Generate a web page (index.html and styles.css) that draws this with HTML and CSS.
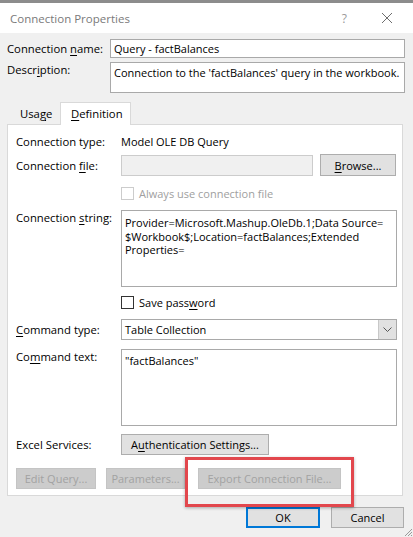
FILE: index.html
```html
<!DOCTYPE html>
<html lang="en">
<head>
    <meta charset="UTF-8">
    <meta name="viewport" content="width=device-width, initial-scale=1.0">
    <link rel="stylesheet" href="styles.css">
    <title>Connection Properties</title>
</head>
<body>

    <div class="strip"></div>
    <div class="titlebar">
        <span class="title">Connection Properties</span>
        <span class="help">?</span>
        <svg class="close" width="12" height="12" viewBox="0 0 12 12"><path d="M1 1L11 11M11 1L1 11" stroke="#6e6e6e" stroke-width="1"/></svg>
    </div>

    <div class="dialog">
        <div class="row name-row">
            <div class="lbl">Connection <u>n</u>ame:</div>
            <div class="box name-box">Query - factBalances</div>
        </div>
        <div class="row desc-row">
            <div class="lbl">Descr<u>i</u>ption:</div>
            <div class="box desc-box">Connection to the 'factBalances' query in the workbook.</div>
        </div>

        <div class="tabs">
            <div class="tab">Usa<u>g</u>e</div>
            <div class="tab active"><u>D</u>efinition</div>
        </div>

        <div class="panel">
            <div class="prow r-type">
                <div class="plbl">Connection type:</div>
                <div>Model OLE DB Query</div>
            </div>
            <div class="prow r-file">
                <div class="plbl">Connection <u>f</u>ile:</div>
                <div class="filebox"></div>
                <div class="btn browse"><u>B</u>rowse...</div>
            </div>
            <div class="prow r-always">
                <div class="plbl"></div>
                <div class="check off"></div>
                <span class="muted">Always use connection file</span>
            </div>
            <div class="prow r-string">
                <div class="plbl top">Connection <u>s</u>tring:</div>
                <div class="box area">Provider=Microsoft.Mashup.OleDb.1;Data Source=<br>$Workbook$;Location=factBalances;Extended<br>Properties=</div>
            </div>
            <div class="prow r-save">
                <div class="plbl"></div>
                <div class="check"></div>
                <span>Save pass<u>w</u>ord</span>
            </div>
            <div class="prow r-ctype">
                <div class="plbl"><u>C</u>ommand type:</div>
                <div class="box select">
                    <span>Table Collection</span>
                    <div class="arrow"><svg width="9" height="6" viewBox="0 0 9 6"><path d="M0.5 0.5L4.5 4.5L8.5 0.5" fill="none" stroke="#555" stroke-width="1"/></svg></div>
                </div>
            </div>
            <div class="prow r-ctext">
                <div class="plbl top">Co<u>m</u>mand text:</div>
                <div class="box area">"factBalances"</div>
            </div>
            <div class="prow r-excel">
                <div class="plbl">Excel Services:</div>
                <div class="btn auth">A<u>u</u>thentication Settings...</div>
            </div>
            <div class="prow r-actions">
                <div class="btn dis edit">Edit Query...</div>
                <div class="btn dis params">Parameters...</div>
                <div class="btn dis export">Export Connection File...</div>
            </div>
        </div>

        <div class="footer">
            <div class="btn ok">OK</div>
            <div class="btn cancel">Cancel</div>
        </div>
    </div>

    <div class="highlight"></div>
    <svg class="grip" width="9" height="9" viewBox="0 0 9 9"><path d="M8 1L1 8M8 4L4 8M8 7L7 8" stroke="#9a9a9a" stroke-width="1"/></svg>

</body>
</html>
```

FILE: styles.css
```css
body{margin: 0;width: 413px;height: 537px;background-color: #f0f0f0;font-family: "Open Sans", "Noto Sans", sans-serif;font-size: 11px;color: #000;overflow: hidden;position: relative;}
u{text-underline-offset: 2px;}

.strip{height: 3px;background-color: #8c8c8c;}
.titlebar{height: 30px;background-color: #fff;display: flex;align-items: center;padding: 0 0 0 10px;}
.title{color: #7a7a7a;font-size: 11.5px;flex: 1;}
.help{color: #9a9a9a;font-size: 12px;margin-right: 34px;}
.close{margin-right: 20px;}

.dialog{padding: 0 8px 0 7px;}
.row{display: flex;}
.lbl{width: 103px;font-size: 11.3px;}
.box{background-color: #fff;border: 1px solid #a9a9a9;box-sizing: border-box;padding: 0 3px;}
.name-row{margin-top: 6px;align-items: center;}
.name-box{width: 295px;height: 19px;line-height: 17px;}
.desc-row{margin-top: 4px;}
.desc-row .lbl{line-height: 15px;}
.desc-box{width: 295px;height: 31px;line-height: 17px;padding-top: 1px;white-space: nowrap;overflow: hidden;}

.tabs{display: flex;margin-top: 9px;height: 22px;align-items: flex-end;position: relative;z-index: 1;}
.tab{height: 20px;line-height: 19px;padding: 0 10px 0 13px;box-sizing: border-box;width: 53px;font-size: 11.3px;}
.tab.active{height: 23px;width: 71px;background-color: #fff;border: 1px solid #d9d9d9;border-bottom: none;margin-bottom: -1px;padding: 0 0 0 10px;line-height: 21px;}

.panel{width: 396px;height: 372px;box-sizing: border-box;background-color: #fff;border: 1px solid #d9d9d9;padding: 0 0 0 8px;}
.prow{display: flex;align-items: center;}
.plbl{width: 105px;flex: none;font-size: 11.3px;}
.plbl.top{align-self: flex-start;line-height: 15px;}

.r-type{margin-top: 8px;height: 16px;}
.r-file{margin-top: 5px;height: 22px;}
.filebox{width: 192px;height: 21px;box-sizing: border-box;background-color: #f0f0f0;border: 1px solid #cccccc;}
.r-always{margin-top: 11px;height: 13px;}
.check{width: 13px;height: 13px;box-sizing: border-box;border: 1px solid #333;margin-right: 5px;background-color: #fff;}
.check.off{border-color: #cccccc;}
.muted{color: #a0a0a0;}
.r-string{margin-top: 10px;align-items: flex-start;}
.area{width: 276px;height: 77px;line-height: 13.5px;padding: 5px 3px 0 3px;}
.r-save{margin-top: 9px;height: 13px;}
.r-ctype{margin-top: 10px;}
.select{width: 276px;height: 21px;display: flex;align-items: center;padding: 0 0 0 3px;}
.select span{flex: 1;}
.arrow{width: 17px;height: 19px;background-color: #e1e1e1;border-left: 1px solid #c8c8c8;display: flex;align-items: center;justify-content: center;}
.r-ctext{margin-top: 9px;align-items: flex-start;}
.r-ctext .area{padding-top: 4px;}
.r-excel{margin-top: 8px;}
.r-actions{margin-top: 13px;}

.btn{height: 21px;box-sizing: border-box;background-color: #e1e1e1;border: 1px solid #adadad;display: flex;align-items: center;justify-content: center;}
.browse{width: 76px;height: 22px;margin-left: 7px;}
.auth{width: 148px;}
.dis{background-color: #cccccc;border-color: #c4c4c4;color: #a2a2a2;}
.edit{width: 80px;}
.params{width: 79px;margin-left: 10px;}
.export{width: 143px;margin-left: 13px;}

.footer{display: flex;justify-content: flex-end;margin-top: 11px;padding-right: 1px;}
.ok{width: 74px;height: 21px;border: 2px solid #0078d7;}
.cancel{width: 73px;height: 21px;margin-left: 11px;}

.highlight{position: absolute;left: 185px;top: 457px;width: 169px;height: 50px;box-sizing: border-box;border: 3px solid #e2474d;box-shadow: 0 1px 3px rgba(0,0,0,0.3);}
.grip{position: absolute;right: 0;bottom: 0;}
```
